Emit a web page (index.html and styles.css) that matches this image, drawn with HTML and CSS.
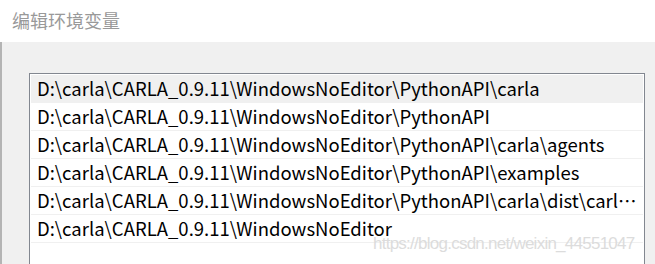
FILE: index.html
```html
<!DOCTYPE html>
<html lang="zh-CN">
<head>
  <meta charset="UTF-8" />
  <title>编辑环境变量</title>
  <link rel="stylesheet" href="styles.css">
</head>
<body>

<header class="titlebar">
  <h1>编辑环境变量</h1>
</header>

<div class="panel">
  <div class="listbox">
    <ul class="pathlist">
      <li class="selected">D:\carla\CARLA_0.9.11\WindowsNoEditor\PythonAPI\carla</li>
      <li>D:\carla\CARLA_0.9.11\WindowsNoEditor\PythonAPI</li>
      <li>D:\carla\CARLA_0.9.11\WindowsNoEditor\PythonAPI\carla\agents</li>
      <li>D:\carla\CARLA_0.9.11\WindowsNoEditor\PythonAPI\examples</li>
      <li>D:\carla\CARLA_0.9.11\WindowsNoEditor\PythonAPI\carla\dist\carla-0.9.11-py3.7-win-amd64.egg</li>
      <li>D:\carla\CARLA_0.9.11\WindowsNoEditor</li>
    </ul>
    <span class="watermark">https://blog.csdn.net/weixin_44551047</span>
  </div>
</div>

</body>
</html>
```

FILE: styles.css
```css
* {
  box-sizing: border-box;
  margin: 0;
  padding: 0;
}
html, body {
  height: 100%;
  overflow: hidden;
}
body {
  font-family: "Noto Sans CJK SC", "Noto Sans", sans-serif;
  background: #f0f0f0;
  color: #000;
}
.titlebar {
  height: 42px;
  background: #fff;
  padding: 8px 0 0 12px;
}
.titlebar h1 {
  font-size: 18px;
  font-weight: 400;
  line-height: 24px;
  color: #999;
}
.panel {
  height: calc(100% - 42px);
  padding: 31px 10px 0 27px;
  border-left: 2px solid #b4b4b4;
}
.listbox {
  position: relative;
  height: 100%;
  overflow: hidden;
  background: #fff;
  border: 1px solid #828790;
  border-bottom: none;
  padding: 1px 1px 0 1px;
}
.pathlist {
  list-style: none;
}
.pathlist li {
  height: 28px;
  line-height: 27px;
  font-size: 18.5px;
  padding: 0 3px 0 6px;
  border-bottom: 1px solid #f0f0f0;
  white-space: nowrap;
  overflow: hidden;
  text-overflow: ellipsis;
}
.pathlist li.selected {
  background: #f0f0f0;
}
.watermark {
  position: absolute;
  left: 343px;
  top: 160px;
  font-family: "Liberation Sans", Arial, sans-serif;
  font-size: 17px;
  letter-spacing: -0.75px;
  color: #dcdcdc;
  white-space: nowrap;
}
```
